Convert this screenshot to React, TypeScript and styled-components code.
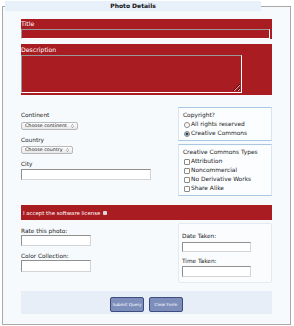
import React from 'react';
import styled, { createGlobalStyle } from 'styled-components';

const GlobalStyle = createGlobalStyle`
  html, body {
    margin: 0;
    padding: 0;
    background: #ffffff;
  }
  body {
    font-family: "DejaVu Sans", Verdana, sans-serif;
    color: #222;
  }
`;

const RED = '#a91c22';

const Frame = styled.fieldset`
  box-sizing: border-box;
  width: 289px;
  margin: 1px 3px 0 2px;
  padding: 0;
  border: 1px solid #a9a9a9;
  background: #f7fafd;
  min-width: 0;
`;

const Legend = styled.legend`
  box-sizing: border-box;
  margin-left: 2px;
  padding: 0;
`;

const LegendText = styled.span`
  display: block;
  width: 256px;
  height: 10px;
  background: #e8f0f9;
  font-size: 6px;
  line-height: 10px;
  font-weight: bold;
  text-align: center;
  color: #111;
`;

const Body = styled.div`
  display: flex;
  flex-direction: column;
  padding: 8px 18px 10px 18px;
`;

const Band = styled.div<{ $gap?: number; $padBottom?: number }>`
  background: ${RED};
  margin-top: ${(p) => p.$gap ?? 0}px;
  padding-bottom: ${(p) => p.$padBottom ?? 0}px;
`;

const BandLabel = styled.label<{ $h: number }>`
  display: block;
  color: #fff;
  font-size: 6.2px;
  line-height: ${(p) => p.$h}px;
  height: ${(p) => p.$h}px;
`;

const BandInput = styled.input`
  display: block;
  box-sizing: border-box;
  width: 249px;
  height: 10px;
  margin: 0;
  padding: 0;
  background: transparent;
  border: 1px solid;
  border-color: #9a9a9a #ffffff #ffffff #9a9a9a;
  outline: none;
`;

const BandArea = styled.textarea`
  display: block;
  box-sizing: border-box;
  width: 221px;
  height: 38px;
  margin: 0;
  padding: 0;
  background: transparent;
  border: 1px solid;
  border-color: #9a9a9a #ffffff #ffffff #9a9a9a;
  outline: none;
  resize: both;
`;

const Row = styled.div<{ $gap: number }>`
  display: flex;
  justify-content: space-between;
  align-items: flex-start;
  margin-top: ${(p) => p.$gap}px;
`;

const Column = styled.div<{ $padTop?: number }>`
  display: flex;
  flex-direction: column;
  align-items: flex-start;
  padding-top: ${(p) => p.$padTop ?? 0}px;
`;

const FieldLabel = styled.label<{ $gap?: number; $h?: number }>`
  display: block;
  font-size: 5.8px;
  line-height: ${(p) => p.$h ?? 10}px;
  height: ${(p) => p.$h ?? 10}px;
  margin-top: ${(p) => p.$gap ?? 0}px;
  color: #222;
`;

const TextBox = styled.input<{ $w: number; $h?: number }>`
  display: block;
  box-sizing: border-box;
  width: ${(p) => p.$w}px;
  height: ${(p) => p.$h ?? 11}px;
  margin: 0;
  padding: 0;
  background: #fff;
  border: 1px solid;
  border-color: #8f8f8f #d4d4d4 #d4d4d4 #8f8f8f;
  outline: none;
`;

const SelectWrap = styled.span<{ $w: number }>`
  position: relative;
  display: block;
  width: ${(p) => p.$w}px;
  height: 8px;
  margin-top: 1px;
  font-size: 0;
  line-height: 0;
`;

const Select = styled.select`
  display: block;
  appearance: none;
  box-sizing: border-box;
  width: 100%;
  height: 8px;
  margin: 0;
  padding: 0 0 0 3px;
  font-family: "DejaVu Sans", Verdana, sans-serif;
  font-size: 4.8px;
  line-height: 6px;
  color: #222;
  border: 1px solid #b9b9b9;
  border-radius: 2px;
  background: linear-gradient(#ffffff, #e6e6e6);
  outline: none;
`;

const SelectArrow = styled.svg`
  position: absolute;
  right: 4px;
  top: 2px;
  width: 3px;
  height: 4px;
  pointer-events: none;
`;

const OptionBox = styled.div<{ $gap?: number }>`
  box-sizing: border-box;
  width: 94px;
  margin-top: ${(p) => p.$gap ?? 0}px;
  padding: 3px 3px 2px 4px;
  border: 1px solid #d8e6f3;
  border-top-color: #a9c8e6;
  border-bottom-color: #a9c8e6;
  background: #fbfdff;
`;

const BoxTitle = styled.div`
  font-size: 5.9px;
  line-height: 9px;
  color: #222;
`;

const Choice = styled.label`
  display: flex;
  align-items: center;
  font-size: 5.9px;
  line-height: 9px;
  height: 9px;
  color: #222;
`;

const Radio = styled.input.attrs({ type: 'radio' })`
  appearance: none;
  box-sizing: border-box;
  width: 6px;
  height: 6px;
  margin: 0 1px 0 1px;
  border: 1px solid #8a8a8a;
  border-radius: 50%;
  background: #fff;
  &:checked {
    background: radial-gradient(circle, #3c3c3c 0 1.2px, #9ab9db 1.6px);
  }
`;

const Check = styled.input.attrs({ type: 'checkbox' })`
  appearance: none;
  box-sizing: border-box;
  width: 6px;
  height: 6px;
  margin: 0 1px 0 1px;
  border: 1px solid #8a8a8a;
  border-radius: 1px;
  background: #fff;
`;

const LicenseBand = styled.label`
  display: flex;
  align-items: center;
  gap: 3px;
  height: 15px;
  margin-top: 9px;
  padding-left: 2px;
  background: ${RED};
  color: #fff;
  font-size: 5.4px;
`;

const SmallCheck = styled.input.attrs({ type: 'checkbox' })`
  appearance: none;
  box-sizing: border-box;
  width: 4px;
  height: 4px;
  margin: 0;
  border: none;
  border-radius: 1px;
  background: #d9d9d9;
`;

const DateBox = styled.div`
  box-sizing: border-box;
  width: 94px;
  height: 60px;
  padding: 6px 0 0 3px;
  border: 1px solid #e3eaf1;
  border-radius: 2px;
  background: #fafcfe;
`;

const ButtonBar = styled.div`
  display: flex;
  justify-content: center;
  gap: 5px;
  margin-top: 8px;
  padding: 6px 0 2px;
  background: #e7eef8;
`;

const Button = styled.button`
  box-sizing: border-box;
  width: 34px;
  height: 15px;
  margin: 0;
  padding: 0;
  border: 1px solid #3d4d82;
  border-radius: 2px;
  background: #7d8ebb;
  color: #fff;
  font-family: "DejaVu Sans", Verdana, sans-serif;
  font-size: 4.2px;
`;

const Arrow = () => (
  <SelectArrow viewBox="0 0 3 4">
    <path d="M0.3 1.6 L1.5 0.4 L2.7 1.6 M0.3 2.4 L1.5 3.6 L2.7 2.4" stroke="#555" strokeWidth="0.5" fill="none" />
  </SelectArrow>
);

const App = (): JSX.Element => (
  <>
    <GlobalStyle />
    <Frame>
      <Legend>
        <LegendText>Photo Details</LegendText>
      </Legend>
      <Body>
        <Band>
          <BandLabel $h={10}>Title</BandLabel>
          <BandInput />
        </Band>
        <Band $gap={5} $padBottom={2}>
          <BandLabel $h={11}>Description</BandLabel>
          <BandArea />
        </Band>

        <Row $gap={12}>
          <Column $padTop={3}>
            <FieldLabel $h={11}>Continent</FieldLabel>
            <SelectWrap $w={57}>
              <Select defaultValue="">
                <option value="">Choose continent</option>
              </Select>
              <Arrow />
            </SelectWrap>
            <FieldLabel $gap={6} $h={9}>Country</FieldLabel>
            <SelectWrap $w={52}>
              <Select defaultValue="">
                <option value="">Choose country</option>
              </Select>
              <Arrow />
            </SelectWrap>
            <FieldLabel $gap={6} $h={9}>City</FieldLabel>
            <TextBox $w={130} />
          </Column>
          <Column>
            <OptionBox>
              <BoxTitle>Copyright?</BoxTitle>
              <Choice>
                <Radio name="copyright" />
                All rights reserved
              </Choice>
              <Choice>
                <Radio name="copyright" defaultChecked />
                Creative Commons
              </Choice>
            </OptionBox>
            <OptionBox $gap={3}>
              <BoxTitle>Creative Commons Types</BoxTitle>
              <Choice>
                <Check />
                Attribution
              </Choice>
              <Choice>
                <Check />
                Noncommercial
              </Choice>
              <Choice>
                <Check />
                No Derivative Works
              </Choice>
              <Choice>
                <Check />
                Share Alike
              </Choice>
            </OptionBox>
          </Column>
        </Row>

        <LicenseBand>
          I accept the software license
          <SmallCheck />
        </LicenseBand>

        <Row $gap={3}>
          <Column $padTop={4}>
            <FieldLabel $h={8}>Rate this photo:</FieldLabel>
            <TextBox $w={70} />
            <FieldLabel $gap={6} $h={8}>Color Collection:</FieldLabel>
            <TextBox $w={70} $h={12} />
          </Column>
          <DateBox>
            <FieldLabel $h={12}>Date Taken:</FieldLabel>
            <TextBox $w={69} $h={10} />
            <FieldLabel $gap={4} $h={10}>Time Taken:</FieldLabel>
            <TextBox $w={69} $h={11} />
          </DateBox>
        </Row>

        <ButtonBar>
          <Button type="submit">Submit Query</Button>
          <Button type="reset">Clear Form</Button>
        </ButtonBar>
      </Body>
    </Frame>
  </>
);

export default App;
